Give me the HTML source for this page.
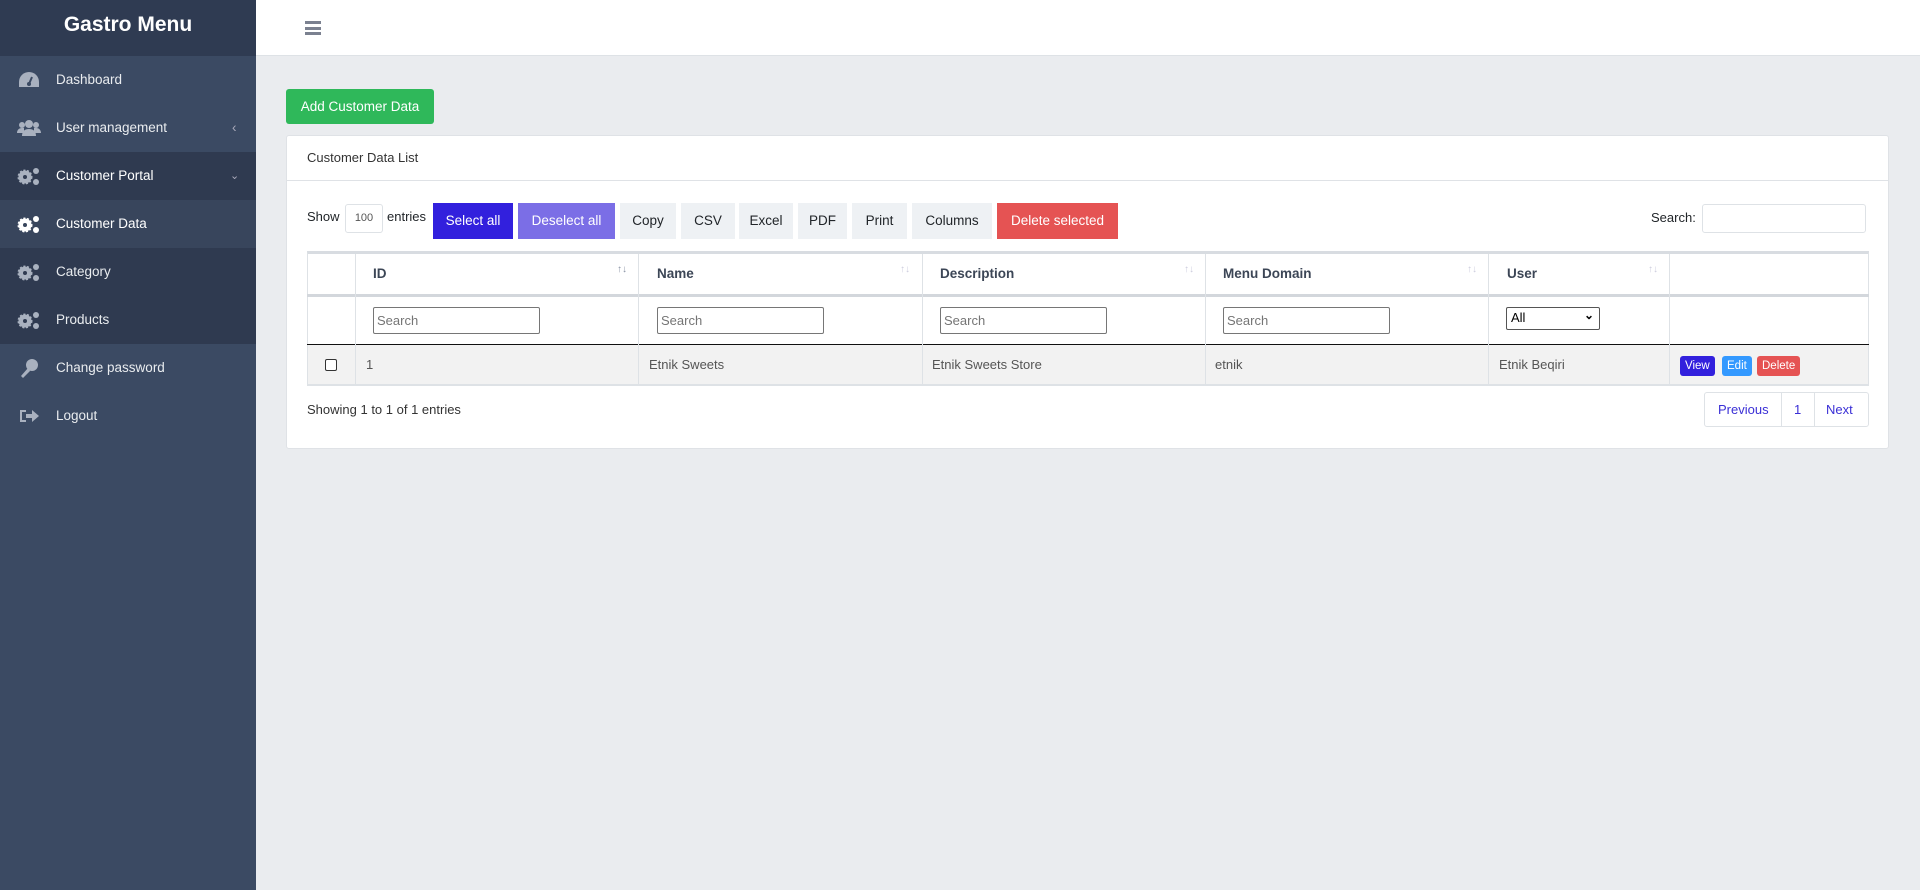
<!DOCTYPE html>
<html><head><meta charset="utf-8"><style>
*{box-sizing:border-box;margin:0;padding:0}
body{width:1920px;height:890px;overflow:hidden;background:#eaecef;font-family:"Liberation Sans",sans-serif;font-size:13px;color:#212529;position:relative}
.a{position:absolute}
#sb{left:0;top:0;width:256px;height:890px;background:#3b4a63}
.brand{left:0;top:0;width:256px;height:56px;background:#2f3b52;color:#fff;font-size:21px;font-weight:bold;text-align:center;line-height:50px}
.it{left:0;width:256px;height:48px;line-height:48px;color:#e9ecef;font-size:13.5px;padding-left:56px}
.it svg{position:absolute;left:17px;top:14px}
.dk{background:#2f3a50}
.ac{background:#38455c;color:#fff}
.hdr{left:256px;top:0;width:1664px;height:56px;background:#fff;border-bottom:1px solid #dee2e6}
.btn{top:203px;height:36px;line-height:36px;text-align:center;font-size:13.5px;color:#212529;background:#eef1f4}
.cell{border-left:1px solid #dee2e6}
.si{width:167px;height:27px;border:1px solid #767676;border-radius:2px;font-size:13px;color:#757575;padding:3px 3px;line-height:20px}
.sm{height:20px;line-height:20px;color:#fff;font-size:11.5px;padding:0 5px;border-radius:3px}
.h{font-weight:bold;color:#3c4656;font-size:13.5px}
</style></head><body>
<div id="sb" class="a"></div>
<div class="a brand">Gastro Menu</div>
<div class="a it" style="top:56px"><svg width="24" height="20" viewBox="0 0 24 20"><path d="M12 2a10 10 0 0 0-10 10v5h20v-5A10 10 0 0 0 12 2z" fill="#a9b1bf"/><path d="M12 14l3-7" stroke="#3b4a63" stroke-width="2"/><circle cx="12" cy="14" r="2" fill="#3b4a63"/></svg>Dashboard</div>
<div class="a it" style="top:104px"><svg width="24" height="20" viewBox="0 0 24 20"><circle cx="12" cy="6" r="4" fill="#a9b1bf"/><circle cx="5" cy="7" r="3" fill="#a9b1bf"/><circle cx="19" cy="7" r="3" fill="#a9b1bf"/><path d="M5 18c0-5 3-7 7-7s7 2 7 7z" fill="#a9b1bf"/><path d="M0 15c0-3 2-5 5-5h2v5z M24 15c0-3-2-5-5-5h-2v5z" fill="#a9b1bf"/></svg>User management<span class="a" style="left:232px;top:0;color:#aab">‹</span></div>
<div class="a it dk" style="top:152px;color:#fff"><svg width="24" height="20" viewBox="0 0 24 20"><circle cx="8" cy="11" r="6.5" fill="#a9b1bf" stroke="#a9b1bf" stroke-width="2" stroke-dasharray="2 1.6"/><circle cx="8" cy="11" r="2" fill="#2f3a50"/><circle cx="19" cy="5" r="3" fill="#a9b1bf"/><circle cx="19" cy="16" r="3" fill="#a9b1bf"/></svg>Customer Portal<span class="a" style="left:230px;top:0;color:#aab;font-size:11px">⌄</span></div>
<div class="a it ac" style="top:200px"><svg width="24" height="20" viewBox="0 0 24 20"><circle cx="8" cy="11" r="6.5" fill="#fff" stroke="#fff" stroke-width="2" stroke-dasharray="2 1.6"/><circle cx="8" cy="11" r="2" fill="#38455c"/><circle cx="19" cy="5" r="3" fill="#fff"/><circle cx="19" cy="16" r="3" fill="#fff"/></svg>Customer Data</div>
<div class="a it dk" style="top:248px"><svg width="24" height="20" viewBox="0 0 24 20"><circle cx="8" cy="11" r="6.5" fill="#a9b1bf" stroke="#a9b1bf" stroke-width="2" stroke-dasharray="2 1.6"/><circle cx="8" cy="11" r="2" fill="#2f3a50"/><circle cx="19" cy="5" r="3" fill="#a9b1bf"/><circle cx="19" cy="16" r="3" fill="#a9b1bf"/></svg>Category</div>
<div class="a it dk" style="top:296px"><svg width="24" height="20" viewBox="0 0 24 20"><circle cx="8" cy="11" r="6.5" fill="#a9b1bf" stroke="#a9b1bf" stroke-width="2" stroke-dasharray="2 1.6"/><circle cx="8" cy="11" r="2" fill="#2f3a50"/><circle cx="19" cy="5" r="3" fill="#a9b1bf"/><circle cx="19" cy="16" r="3" fill="#a9b1bf"/></svg>Products</div>
<div class="a it" style="top:344px"><svg width="24" height="20" viewBox="0 0 24 20"><circle cx="15" cy="7" r="6" fill="#a9b1bf"/><path d="M11 10L4 18l2 2 7-7z" fill="#a9b1bf"/></svg>Change password</div>
<div class="a it" style="top:392px"><svg width="24" height="20" viewBox="0 0 24 20"><path d="M3 4h6v2H5v8h4v2H3z" fill="#a9b1bf"/><path d="M9 8h6V4l7 6-7 6v-4H9z" fill="#a9b1bf"/></svg>Logout</div>

<div class="a hdr"></div>
<div class="a" style="left:305px;top:21px;width:16px;height:14px;border-top:3px solid #7b8190;border-bottom:3px solid #7b8190"><div style="margin-top:2.5px;height:3px;background:#7b8190"></div></div>

<div class="a" style="left:286px;top:89px;width:148px;height:35px;background:#2fb85a;border-radius:3px;color:#fff;line-height:35px;text-align:center;font-size:13.5px">Add Customer Data</div>

<div class="a" style="left:286px;top:135px;width:1603px;height:314px;background:#fff;border:1px solid #dfe2e6;border-radius:3px"></div>
<div class="a" style="left:287px;top:180px;width:1601px;height:1px;background:#dfe2e6"></div>
<div class="a" style="left:307px;top:150px;font-size:13px;color:#333">Customer Data List</div>

<div class="a" style="left:307px;top:209px;font-size:13px">Show</div>
<div class="a" style="left:345px;top:204px;width:38px;height:29px;border:1px solid #dee2e6;border-radius:3px;font-size:11px;line-height:27px;text-align:center;color:#555">100</div>
<div class="a" style="left:387px;top:209px;font-size:13px">entries</div>
<div class="a btn" style="left:433px;width:80px;background:#3220dd;color:#fff">Select all</div>
<div class="a btn" style="left:518px;width:97px;background:#7b6ee6;color:#fff">Deselect all</div>
<div class="a btn" style="left:620px;width:56px">Copy</div>
<div class="a btn" style="left:681px;width:54px">CSV</div>
<div class="a btn" style="left:739px;width:54px">Excel</div>
<div class="a btn" style="left:798px;width:49px">PDF</div>
<div class="a btn" style="left:852px;width:55px">Print</div>
<div class="a btn" style="left:912px;width:80px">Columns</div>
<div class="a btn" style="left:997px;width:121px;background:#e55353;color:#fff">Delete selected</div>
<div class="a" style="left:1651px;top:210px;font-size:13px">Search:</div>
<div class="a" style="left:1702px;top:204px;width:164px;height:29px;border:1px solid #dee2e6;border-radius:3px"></div>

<div class="a" style="left:307px;top:251px;width:1562px;height:134px;border:1px solid #dee2e6;border-top:3px solid #d8dce1"></div>
<div class="a" style="left:307px;top:294px;width:1562px;height:3px;background:#d3d7dc"></div>
<div class="a" style="left:307px;top:344px;width:1562px;height:1px;background:#111"></div>
<div class="a" style="left:308px;top:345px;width:1560px;height:39px;background:#f2f2f2"></div>
<div class="a" style="left:307px;top:384px;width:1562px;height:2px;background:#dee2e6"></div>
<div class="a cell" style="left:355px;top:254px;height:131px"></div>
<div class="a cell" style="left:638px;top:254px;height:131px"></div>
<div class="a cell" style="left:922px;top:254px;height:131px"></div>
<div class="a cell" style="left:1205px;top:254px;height:131px"></div>
<div class="a cell" style="left:1488px;top:254px;height:131px"></div>
<div class="a cell" style="left:1669px;top:254px;height:131px"></div>

<div class="a h" style="left:373px;top:266px">ID</div>
<div class="a h" style="left:657px;top:266px">Name</div>
<div class="a h" style="left:940px;top:266px">Description</div>
<div class="a h" style="left:1223px;top:266px">Menu Domain</div>
<div class="a h" style="left:1507px;top:266px">User</div>
<div class="a" style="left:617px;top:264px;font-size:10px;color:#8a94a6">↑↓</div>
<div class="a" style="left:900px;top:264px;font-size:10px;color:#ccd">↑↓</div>
<div class="a" style="left:1184px;top:264px;font-size:10px;color:#ccd">↑↓</div>
<div class="a" style="left:1467px;top:264px;font-size:10px;color:#ccd">↑↓</div>
<div class="a" style="left:1648px;top:264px;font-size:10px;color:#ccd">↑↓</div>

<div class="a si" style="left:373px;top:307px">Search</div>
<div class="a si" style="left:657px;top:307px">Search</div>
<div class="a si" style="left:940px;top:307px">Search</div>
<div class="a si" style="left:1223px;top:307px">Search</div>
<div class="a" style="left:1506px;top:307px;width:94px;height:23px;border:1px solid #555;border-radius:2px;font-size:13px;padding:2px 4px;color:#000">All<span style="position:absolute;right:5px;top:0;font-size:12px;font-weight:bold">⌄</span></div>

<div class="a" style="left:325px;top:359px;width:12px;height:12px;border:1px solid #333;border-radius:2px;background:#fff"></div>
<div class="a" style="left:366px;top:357px;font-size:13px;color:#555">1</div>
<div class="a" style="left:649px;top:357px;font-size:13px;color:#555">Etnik Sweets</div>
<div class="a" style="left:932px;top:357px;font-size:13px;color:#555">Etnik Sweets Store</div>
<div class="a" style="left:1215px;top:357px;font-size:13px;color:#555">etnik</div>
<div class="a" style="left:1499px;top:357px;font-size:13px;color:#555">Etnik Beqiri</div>
<div class="a sm" style="left:1680px;top:356px;background:#3220dd">View</div>
<div class="a sm" style="left:1722px;top:356px;background:#3399ff">Edit</div>
<div class="a sm" style="left:1757px;top:356px;background:#e55353">Delete</div>

<div class="a" style="left:307px;top:402px;font-size:13px;color:#333">Showing 1 to 1 of 1 entries</div>
<div class="a" style="left:1704px;top:392px;width:165px;height:35px;border:1px solid #dee2e6;border-radius:3px"></div>
<div class="a" style="left:1781px;top:392px;width:1px;height:35px;background:#dee2e6"></div>
<div class="a" style="left:1814px;top:392px;width:1px;height:35px;background:#dee2e6"></div>
<div class="a" style="left:1718px;top:402px;font-size:13px;color:#3a2fd6">Previous</div>
<div class="a" style="left:1794px;top:402px;font-size:13px;color:#3a2fd6">1</div>
<div class="a" style="left:1826px;top:402px;font-size:13px;color:#3a2fd6">Next</div>
</body></html>
